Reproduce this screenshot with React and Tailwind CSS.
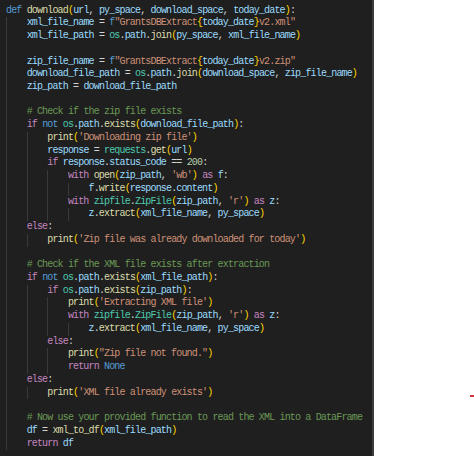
const COLORS = {
  k: 'text-[#569cd6]',
  p: 'text-[#c586c0]',
  f: 'text-[#dcdcaa]',
  v: 'text-[#9cdcfe]',
  s: 'text-[#ce9178]',
  m: 'text-[#4ec9b0]',
  c: 'text-[#6a9955]',
  n: 'text-[#b5cea8]',
  o: 'text-[#d4d4d4]',
  b: 'text-[#ffd700]',
}

// each line: [indent level, tokens as [kind, text]]
const LINES = [
  [0, [['k', 'def'], ['o', ' '], ['f', 'download'], ['b', '('], ['v', 'url'], ['o', ', '], ['v', 'py_space'], ['o', ', '], ['v', 'download_space'], ['o', ', '], ['v', 'today_date'], ['b', ')'], ['o', ':']]],
  [1, [['v', 'xml_file_name'], ['o', ' = '], ['k', 'f'], ['s', '"GrantsDBExtract'], ['b', '{'], ['v', 'today_date'], ['b', '}'], ['s', 'v2.xml"']]],
  [1, [['v', 'xml_file_path'], ['o', ' = '], ['m', 'os'], ['o', '.'], ['v', 'path'], ['o', '.'], ['f', 'join'], ['b', '('], ['v', 'py_space'], ['o', ', '], ['v', 'xml_file_name'], ['b', ')']]],
  [1, []],
  [1, [['v', 'zip_file_name'], ['o', ' = '], ['k', 'f'], ['s', '"GrantsDBExtract'], ['b', '{'], ['v', 'today_date'], ['b', '}'], ['s', 'v2.zip"']]],
  [1, [['v', 'download_file_path'], ['o', ' = '], ['m', 'os'], ['o', '.'], ['v', 'path'], ['o', '.'], ['f', 'join'], ['b', '('], ['v', 'download_space'], ['o', ', '], ['v', 'zip_file_name'], ['b', ')']]],
  [1, [['v', 'zip_path'], ['o', ' = '], ['v', 'download_file_path']]],
  [1, []],
  [1, [['c', '# Check if the zip file exists']]],
  [1, [['p', 'if'], ['o', ' '], ['k', 'not'], ['o', ' '], ['m', 'os'], ['o', '.'], ['v', 'path'], ['o', '.'], ['f', 'exists'], ['b', '('], ['v', 'download_file_path'], ['b', ')'], ['o', ':']]],
  [2, [['f', 'print'], ['b', '('], ['s', "'Downloading zip file'"], ['b', ')']]],
  [2, [['v', 'response'], ['o', ' = '], ['m', 'requests'], ['o', '.'], ['f', 'get'], ['b', '('], ['v', 'url'], ['b', ')']]],
  [2, [['p', 'if'], ['o', ' '], ['v', 'response'], ['o', '.'], ['v', 'status_code'], ['o', ' == '], ['n', '200'], ['o', ':']]],
  [3, [['p', 'with'], ['o', ' '], ['f', 'open'], ['b', '('], ['v', 'zip_path'], ['o', ', '], ['s', "'wb'"], ['b', ')'], ['o', ' '], ['p', 'as'], ['o', ' '], ['v', 'f'], ['o', ':']]],
  [4, [['v', 'f'], ['o', '.'], ['f', 'write'], ['b', '('], ['v', 'response'], ['o', '.'], ['v', 'content'], ['b', ')']]],
  [3, [['p', 'with'], ['o', ' '], ['m', 'zipfile'], ['o', '.'], ['m', 'ZipFile'], ['b', '('], ['v', 'zip_path'], ['o', ', '], ['s', "'r'"], ['b', ')'], ['o', ' '], ['p', 'as'], ['o', ' '], ['v', 'z'], ['o', ':']]],
  [4, [['v', 'z'], ['o', '.'], ['f', 'extract'], ['b', '('], ['v', 'xml_file_name'], ['o', ', '], ['v', 'py_space'], ['b', ')']]],
  [1, [['p', 'else'], ['o', ':']]],
  [2, [['f', 'print'], ['b', '('], ['s', "'Zip file was already downloaded for today'"], ['b', ')']]],
  [1, []],
  [1, [['c', '# Check if the XML file exists after extraction']]],
  [1, [['p', 'if'], ['o', ' '], ['k', 'not'], ['o', ' '], ['m', 'os'], ['o', '.'], ['v', 'path'], ['o', '.'], ['f', 'exists'], ['b', '('], ['v', 'xml_file_path'], ['b', ')'], ['o', ':']]],
  [2, [['p', 'if'], ['o', ' '], ['m', 'os'], ['o', '.'], ['v', 'path'], ['o', '.'], ['f', 'exists'], ['b', '('], ['v', 'zip_path'], ['b', ')'], ['o', ':']]],
  [3, [['f', 'print'], ['b', '('], ['s', "'Extracting XML file'"], ['b', ')']]],
  [3, [['p', 'with'], ['o', ' '], ['m', 'zipfile'], ['o', '.'], ['m', 'ZipFile'], ['b', '('], ['v', 'zip_path'], ['o', ', '], ['s', "'r'"], ['b', ')'], ['o', ' '], ['p', 'as'], ['o', ' '], ['v', 'z'], ['o', ':']]],
  [4, [['v', 'z'], ['o', '.'], ['f', 'extract'], ['b', '('], ['v', 'xml_file_name'], ['o', ', '], ['v', 'py_space'], ['b', ')']]],
  [2, [['p', 'else'], ['o', ':']]],
  [3, [['f', 'print'], ['b', '('], ['s', '"Zip file not found."'], ['b', ')']]],
  [3, [['p', 'return'], ['o', ' '], ['k', 'None']]],
  [1, [['p', 'else'], ['o', ':']]],
  [2, [['f', 'print'], ['b', '('], ['s', "'XML file already exists'"], ['b', ')']]],
  [1, []],
  [1, [['c', '# Now use your provided function to read the XML into a DataFrame']]],
  [1, [['v', 'df'], ['o', ' = '], ['f', 'xml_to_df'], ['b', '('], ['v', 'xml_file_path'], ['b', ')']]],
  [1, [['p', 'return'], ['o', ' '], ['v', 'df']]],
]

function CodeLine({ indent, tokens }) {
  return (
    <div className="flex h-[12.74px] items-center whitespace-pre">
      {Array.from({ length: indent }).map((_, i) => (
        <span key={i} className="inline-block w-[20.64px] h-full shadow-[inset_1px_0_0_#3a3a3a]" />
      ))}
      {tokens.map(([kind, text], i) => (
        <span key={i} className={COLORS[kind]}>
          {text}
        </span>
      ))}
    </div>
  )
}

export default function App() {
  return (
    <div className="relative flex w-[474px] h-[456px] bg-white overflow-hidden">
      <div className="w-[374px] h-full bg-[#1f1f1f] border-r-2 border-[#3c3c3c] pt-[4.6px] pl-[6px] font-['Liberation_Mono',monospace] text-[10px] tracking-[-0.84px] leading-[12.74px]">
        {LINES.map(([indent, tokens], i) => (
          <CodeLine key={i} indent={indent} tokens={tokens} />
        ))}
      </div>
      <div className="absolute left-[470px] top-[395px] w-[4px] h-[2px] bg-[#d0363b]" />
    </div>
  )
}
